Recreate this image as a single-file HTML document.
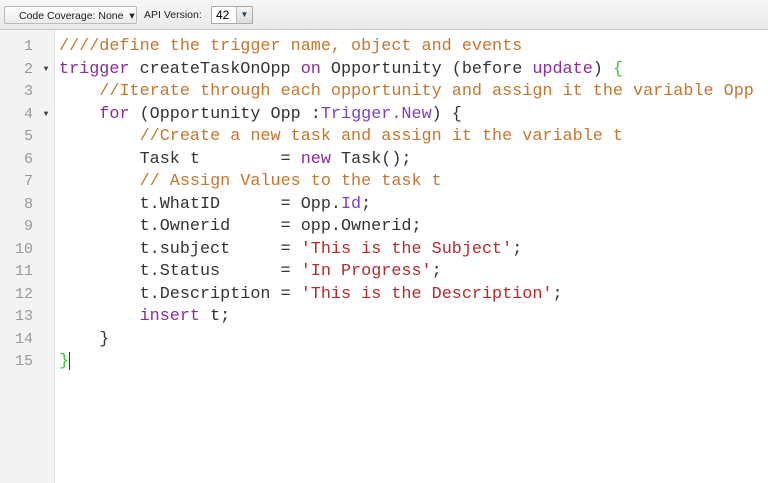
<!DOCTYPE html>
<html><head><style>
body{margin:0;width:768px;height:483px;background:#fff;overflow:hidden;font-family:"Liberation Sans",sans-serif;position:relative}
.tb{position:absolute;left:0;top:0;width:768px;height:29px;background:linear-gradient(#f7f7f7,#e9e9e9);border-bottom:1px solid #c9c9c9}
.btn{position:absolute;left:4px;top:6px;width:133px;height:18px;border:1px solid #bbb;border-radius:2px;background:linear-gradient(#fff,#eaeaea);font-size:10.5px;color:#222;line-height:18px;padding-left:14px;box-sizing:border-box}
.lbl{position:absolute;left:144px;top:9px;font-size:10.5px;color:#222}
.sel{position:absolute;left:211px;top:6px;width:42px;height:18px;border:1px solid #aaa;background:#fff;box-sizing:border-box;font-size:12px;line-height:16px;padding-left:4px}
.sel i{position:absolute;right:0;top:0;width:15px;height:16px;background:linear-gradient(#f4f4f4,#dcdcdc);border-left:1px solid #bbb;font-style:normal;font-size:8px;color:#246;text-align:center;line-height:16px}
.gut{position:absolute;left:0;top:30px;width:54px;height:453px;background:#f3f3f3;border-right:1px solid #e0e0e0}
.code{position:absolute;left:0;top:36px;font-family:"Liberation Mono",monospace;font-size:16.8px;line-height:22.5px;white-space:pre;color:#333}
.ln{display:inline-block;width:33px;text-align:right;color:#999;font-size:15px}
.fd{display:inline-block;width:26px;font-size:8px;color:#444;text-align:center;vertical-align:top}
.c{color:#c5762d}.k{color:#8b2c9c}.s{color:#b52a2a}.t{color:#7a3fc8}.g{color:#3c3}
.cur{display:inline-block;width:1px;height:18px;background:#333;vertical-align:middle}
</style></head><body>
<div class="tb"><div class="btn">Code Coverage: None &nbsp;▾</div><div class="lbl">API Version:</div><div class="sel">42<i>▼</i></div></div>
<div class="gut"></div>
<div class="code"><span class="ln">1</span><span class="fd"></span><span class="c">////define the trigger name, object and events</span>
<span class="ln">2</span><span class="fd">▼</span><span class="k">trigger</span> createTaskOnOpp <span class="k">on</span> Opportunity (before <span class="k">update</span>) <span class="g">{</span>
<span class="ln">3</span><span class="fd"></span>    <span class="c">//Iterate through each opportunity and assign it the variable Opp</span>
<span class="ln">4</span><span class="fd">▼</span>    <span class="k">for</span> (Opportunity Opp :<span class="t">Trigger.New</span>) {
<span class="ln">5</span><span class="fd"></span>        <span class="c">//Create a new task and assign it the variable t</span>
<span class="ln">6</span><span class="fd"></span>        Task t        = <span class="k">new</span> Task();
<span class="ln">7</span><span class="fd"></span>        <span class="c">// Assign Values to the task t</span>
<span class="ln">8</span><span class="fd"></span>        t.WhatID      = Opp.<span class="t">Id</span>;
<span class="ln">9</span><span class="fd"></span>        t.Ownerid     = opp.Ownerid;
<span class="ln">10</span><span class="fd"></span>        t.subject     = <span class="s">'This is the Subject'</span>;
<span class="ln">11</span><span class="fd"></span>        t.Status      = <span class="s">'In Progress'</span>;
<span class="ln">12</span><span class="fd"></span>        t.Description = <span class="s">'This is the Description'</span>;
<span class="ln">13</span><span class="fd"></span>        <span class="k">insert</span> t;
<span class="ln">14</span><span class="fd"></span>    }
<span class="ln">15</span><span class="fd"></span><span class="g">}</span><span class="cur"></span></div>
</body></html>
